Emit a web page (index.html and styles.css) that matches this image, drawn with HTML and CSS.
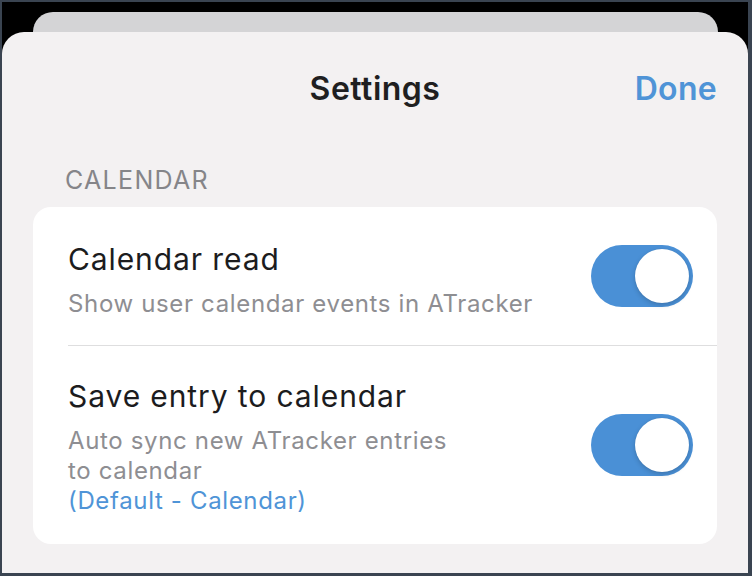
FILE: index.html
```html
<!DOCTYPE html>
<html lang="en">
<head>
<meta charset="utf-8">
<title>Settings</title>
<link rel="stylesheet" href="styles.css">
</head>
<body>
<div class="screen">
  <div class="sheet-back"></div>
  <div class="sheet">
    <header class="nav">
      <h1 class="nav-title">Settings</h1>
      <button class="nav-done" type="button">Done</button>
    </header>

    <section class="group">
      <h2 class="group-label">CALENDAR</h2>
      <div class="card">
        <div class="row">
          <div class="row-text">
            <div class="row-title">Calendar read</div>
            <div class="row-sub">Show user calendar events in ATracker</div>
          </div>
          <span class="toggle is-on" role="switch" aria-checked="true"><span class="knob"></span></span>
        </div>
        <div class="divider"></div>
        <div class="row row-tall">
          <div class="row-text">
            <div class="row-title">Save entry to calendar</div>
            <div class="row-sub">Auto sync new ATracker entries<br>to calendar</div>
            <div class="row-link">(Default - Calendar)</div>
          </div>
          <span class="toggle is-on" role="switch" aria-checked="true"><span class="knob"></span></span>
        </div>
      </div>
    </section>
  </div>
</div>
</body>
</html>
```

FILE: styles.css
```css
* { box-sizing: border-box; }

html, body {
  margin: 0;
  padding: 0;
  background: #000;
}

body {
  font-family: Inter, "Noto Sans", "Liberation Sans", sans-serif;
  -webkit-font-smoothing: antialiased;
}

.screen {
  width: 752px;
  height: 576px;
  background: #000;
  border-style: solid;
  border-color: #3a4451;
  border-width: 2px 4px 3px 2px;
  padding-top: 10px;
  display: flex;
  flex-direction: column;
  overflow: hidden;
}

.sheet-back {
  height: 20px;
  margin: 0 30px 0 31px;
  background: #d4d4d6;
  border-radius: 20px 20px 0 0;
  flex: none;
}

.sheet {
  flex: 1;
  background: #f3f1f2;
  border-radius: 22px 22px 0 0;
  display: flex;
  flex-direction: column;
}

.nav {
  height: 112px;
  display: flex;
  align-items: center;
  justify-content: center;
  position: relative;
  padding: 0 32px;
}

.nav-title {
  margin: 0;
  font-size: 32px;
  font-weight: 600;
  color: #1f1f21;
  letter-spacing: 0.5px;
}

.nav-done {
  position: absolute;
  right: 31px;
  top: 50%;
  transform: translateY(-50%);
  background: none;
  border: 0;
  padding: 0;
  font-family: inherit;
  font-size: 32px;
  font-weight: 600;
  color: #4f94d7;
  letter-spacing: 0.3px;
}

.group {
  padding: 0 31px 0 31px;
}

.group-label {
  margin: 0 0 0 32px;
  padding-top: 21px;
  height: 63px;
  font-size: 25px;
  font-weight: 400;
  letter-spacing: 1.3px;
  color: #858589;
  line-height: 30px;
}

.card {
  background: #fff;
  border-radius: 18px;
  overflow: hidden;
}

.row {
  display: flex;
  align-items: center;
  justify-content: space-between;
  padding: 0 24px 0 35px;
  height: 138px;
}

.row-tall {
  height: 198px;
}

.row-text {
  display: flex;
  flex-direction: column;
  margin-top: 8px;
}

.row-tall .row-text {
  margin-top: 4px;
}

.row-title {
  font-size: 30px;
  line-height: 36px;
  color: #1c1c1e;
  letter-spacing: 0.9px;
  margin-bottom: 12px;
}

.row-sub {
  font-size: 24px;
  line-height: 30px;
  color: #8e8e92;
  letter-spacing: 0.65px;
}

.row-link {
  font-size: 24px;
  line-height: 30px;
  color: #4f94d7;
  letter-spacing: 0.65px;
}

.divider {
  height: 1px;
  margin-left: 35px;
  background: #dededf;
}

.toggle {
  flex: none;
  width: 102px;
  height: 62px;
  border-radius: 31px;
  background: #4a90d6;
  position: relative;
}

.toggle .knob {
  position: absolute;
  top: 4px;
  right: 4px;
  width: 54px;
  height: 54px;
  border-radius: 50%;
  background: #fff;
  box-shadow: 0 2px 5px rgba(0, 0, 0, 0.18), 0 0 1px rgba(0, 0, 0, 0.1);
}
```
